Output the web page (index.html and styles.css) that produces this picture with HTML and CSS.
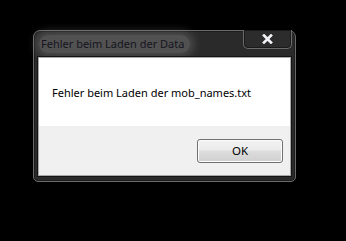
FILE: index.html
```html
<!DOCTYPE html>
<html>
<head>
<meta charset="utf-8">
<link rel="stylesheet" href="styles.css">
</head>
<body>
<div class="window">
  <div class="titlebar">
    <span class="title">Fehler beim Laden der Data</span>
    <div class="close">
      <svg width="11" height="10" viewBox="0 0 11 10"><path d="M2 1.5 L9 8.5 M9 1.5 L2 8.5" stroke="#f4f4f8" stroke-width="2.6" stroke-linecap="square"/></svg>
    </div>
  </div>
  <div class="client">
    <div class="message">Fehler beim Laden der mob_names.txt</div>
    <div class="footer">
      <button class="ok">OK</button>
    </div>
  </div>
</div>
</body>
</html>
```
FILE: styles.css
```css
html, body {
  margin: 0;
  background: #000;
}
body {
  padding: 30px 0 0 33px;
  font-family: "Noto Sans", "Open Sans", sans-serif;
}
.window {
  width: 263px;
  height: 152px;
  box-sizing: border-box;
  border: 1px solid #6a6a6a;
  border-radius: 7px 7px 5px 5px;
  background: #2a2a2a;
  box-shadow: inset 0 0 0 1px #1c1c1c;
  padding: 0 4px 5px 4px;
  display: flex;
  flex-direction: column;
}
.titlebar {
  height: 26px;
  display: flex;
  justify-content: space-between;
  align-items: flex-start;
}
.title {
  margin: 4px 0 0 1px;
  padding: 0 6px 0 2px;
  height: 18px;
  line-height: 18px;
  font-size: 11px;
  color: #151520;
  border-radius: 9px;
  background: rgba(140,140,140,0.4);
  box-shadow: 0 0 8px 4px rgba(140,140,140,0.35);
  white-space: nowrap;
}
.close {
  margin: -1px -1px 0 0;
  width: 49px;
  height: 19px;
  box-sizing: border-box;
  border: 1px solid #6a6a6a;
  border-top: none;
  border-radius: 0 0 5px 5px;
  background: #2c2c2c;
  box-shadow: inset 0 0 0 1px #1a1a1a;
  display: flex;
  align-items: center;
  justify-content: center;
}
.client {
  flex: 1;
  border: 1px solid #a8a8a8;
  box-shadow: 0 0 0 1px #151515;
  display: flex;
  flex-direction: column;
}
.message {
  height: 68px;
  background: #fff;
  font-size: 11px;
  color: #000;
  padding-left: 13px;
  line-height: 70px;
  white-space: nowrap;
}
.footer {
  flex: 1;
  background: #f0f0f0;
  display: flex;
  justify-content: flex-end;
  align-items: flex-start;
  padding: 13px 7px 0 0;
}
.ok {
  width: 86px;
  height: 24px;
  box-sizing: border-box;
  border: 1px solid #707070;
  border-radius: 3px;
  background: linear-gradient(#f2f2f2 0%, #ebebeb 45%, #dddddd 50%, #cfcfcf 100%);
  box-shadow: inset 0 0 0 1px #fcfcfc;
  font-family: "Noto Sans", "Open Sans", sans-serif;
  font-size: 11.5px;
  color: #000;
  padding: 0;
  line-height: 20px;
}
```
